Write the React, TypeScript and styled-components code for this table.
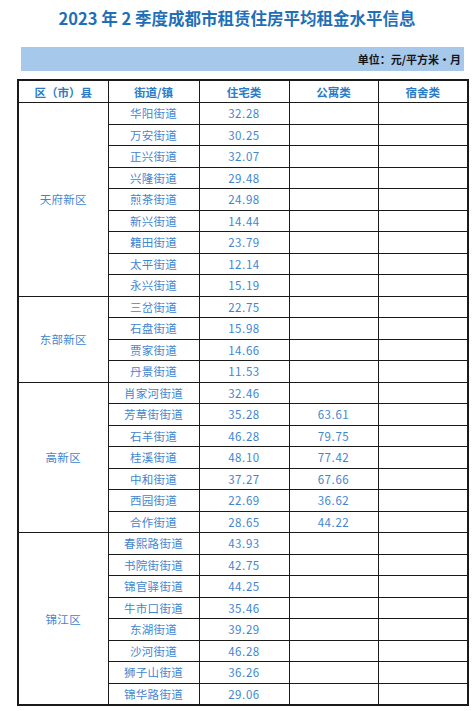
import React from "react";
import styled, { createGlobalStyle } from "styled-components";

const GlobalStyle = createGlobalStyle`
  body {
    margin: 0;
    background: #ffffff;
    font-family: "Noto Sans CJK SC", "Noto Sans", sans-serif;
  }
`;

const Page = styled.main`
  width: 474px;
  padding-top: 6px;
  display: flex;
  flex-direction: column;
`;

const Title = styled.h1`
  margin: 0;
  font-size: 16.5px;
  line-height: 24px;
  font-weight: 700;
  color: #1f6fb8;
  text-align: center;
`;

const UnitBand = styled.div`
  margin: 17px 10px 0 21px;
  height: 24px;
  background: #a6c8ea;
  display: flex;
  align-items: center;
  justify-content: flex-end;
  padding-right: 3px;
  font-size: 11px;
  font-weight: 700;
  color: #151515;
`;

const Table = styled.table`
  margin: 8px 0 0 17px;
  width: 450px;
  border-collapse: collapse;
  table-layout: fixed;
  border: 2px solid #1a1a1a;
`;

const HeadCell = styled.th`
  height: 21px;
  padding: 0;
  border: 1px solid #1a1a1a;
  font-size: 11.5px;
  font-weight: 700;
  color: #2a7cc9;
  text-align: center;
  vertical-align: middle;
`;

const Cell = styled.td<{ $num?: boolean }>`
  height: 20.5px;
  padding: 0;
  border: 1px solid #1a1a1a;
  font-size: 11.5px;
  color: #3f86cf;
  text-align: center;
  vertical-align: middle;
  letter-spacing: ${(p) => (p.$num ? "0.6px" : "0.3px")};
`;

type Row = { street: string; house: string; apt?: string };
type Group = { district: string; rows: Row[] };

const data: Group[] = [
  {
    district: "天府新区",
    rows: [
      { street: "华阳街道", house: "32.28" },
      { street: "万安街道", house: "30.25" },
      { street: "正兴街道", house: "32.07" },
      { street: "兴隆街道", house: "29.48" },
      { street: "煎茶街道", house: "24.98" },
      { street: "新兴街道", house: "14.44" },
      { street: "籍田街道", house: "23.79" },
      { street: "太平街道", house: "12.14" },
      { street: "永兴街道", house: "15.19" },
    ],
  },
  {
    district: "东部新区",
    rows: [
      { street: "三岔街道", house: "22.75" },
      { street: "石盘街道", house: "15.98" },
      { street: "贾家街道", house: "14.66" },
      { street: "丹景街道", house: "11.53" },
    ],
  },
  {
    district: "高新区",
    rows: [
      { street: "肖家河街道", house: "32.46" },
      { street: "芳草街街道", house: "35.28", apt: "63.61" },
      { street: "石羊街道", house: "46.28", apt: "79.75" },
      { street: "桂溪街道", house: "48.10", apt: "77.42" },
      { street: "中和街道", house: "37.27", apt: "67.66" },
      { street: "西园街道", house: "22.69", apt: "36.62" },
      { street: "合作街道", house: "28.65", apt: "44.22" },
    ],
  },
  {
    district: "锦江区",
    rows: [
      { street: "春熙路街道", house: "43.93" },
      { street: "书院街街道", house: "42.75" },
      { street: "锦官驿街道", house: "44.25" },
      { street: "牛市口街道", house: "35.46" },
      { street: "东湖街道", house: "39.29" },
      { street: "沙河街道", house: "46.28" },
      { street: "狮子山街道", house: "36.26" },
      { street: "锦华路街道", house: "29.06" },
    ],
  },
];

const App = () => (
  <>
    <GlobalStyle />
    <Page>
      <Title>2023 年 2 季度成都市租赁住房平均租金水平信息</Title>
      <UnitBand>单位：元/平方米·月</UnitBand>
      <Table>
        <colgroup>
          <col style={{ width: 90 }} />
          <col style={{ width: 91 }} />
          <col style={{ width: 90 }} />
          <col style={{ width: 89 }} />
          <col style={{ width: 90 }} />
        </colgroup>
        <thead>
          <tr>
            <HeadCell>区（市）县</HeadCell>
            <HeadCell>街道/镇</HeadCell>
            <HeadCell>住宅类</HeadCell>
            <HeadCell>公寓类</HeadCell>
            <HeadCell>宿舍类</HeadCell>
          </tr>
        </thead>
        <tbody>
          {data.map((g) =>
            g.rows.map((r, i) => (
              <tr key={g.district + r.street}>
                {i === 0 && <Cell rowSpan={g.rows.length}>{g.district}</Cell>}
                <Cell>{r.street}</Cell>
                <Cell $num>{r.house}</Cell>
                <Cell $num>{r.apt ?? ""}</Cell>
                <Cell />
              </tr>
            ))
          )}
        </tbody>
      </Table>
    </Page>
  </>
);

export default App;
